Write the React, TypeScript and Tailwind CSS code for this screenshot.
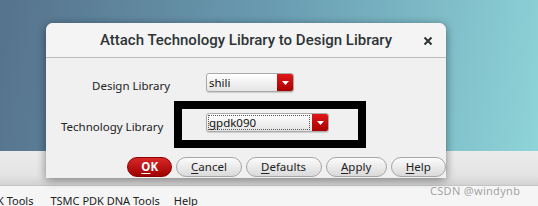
import React from "react";

const font = { fontFamily: '"Noto Sans", "Open Sans", sans-serif' };

function Combo({ value, width, focus }: { value: string; width: string; focus?: boolean }) {
  return (
    <div
      className={`flex h-[19px] ${width} rounded-[3px] border border-[#a9a9a9] overflow-hidden bg-[linear-gradient(#ffffff,#e4e4e4)] shadow-[0_1px_1px_rgba(0,0,0,0.15)]`}
    >
      <div className="flex-1 flex items-center pl-[1px] pr-[2px] py-[1px]">
        <div
          className={`flex-1 h-full flex items-center text-[11.5px] leading-none text-[#111] ${
            focus ? "border border-dotted border-[#555]" : "border border-transparent"
          }`}
        >
          {value}
        </div>
      </div>
      <div className="w-[16px] h-full flex items-center justify-center bg-[linear-gradient(#e01818,#a80000)]">
        <svg width="7" height="4" viewBox="0 0 7 4">
          <polygon points="0,0 7,0 3.5,4" fill="#fff" />
        </svg>
      </div>
    </div>
  );
}

function Btn({ first, rest, width, primary }: { first: string; rest: string; width: string; primary?: boolean }) {
  return (
    <div
      className={`h-[20px] ${width} rounded-full flex items-center justify-center text-[11.5px] leading-none ${
        primary
          ? "bg-[linear-gradient(#d82828,#a00000)] border border-[#8a0000] text-white font-bold"
          : "bg-[linear-gradient(#fbfbfb,#dadada)] border border-[#a6a6a6] text-[#222]"
      }`}
    >
      <span>
        <span className="underline underline-offset-2">{first}</span>
        {rest}
      </span>
    </div>
  );
}

export default function App() {
  return (
    <div className="relative w-[538px] h-[206px] overflow-hidden" style={font}>
      <div className="flex flex-col h-full">
        <div className="h-[153px] bg-[linear-gradient(100deg,#56728c_0%,#6a9db2_50%,#8ed4d8_100%)]" />
        <div className="h-[35px] bg-[linear-gradient(#ececec,#e4e4e4_70%,#d2d2d2)] border-b border-[#c4c4c4]" />
        <div className="flex-1 bg-[#f5f5f5] text-[11px] text-[#222] leading-none">
          <div className="flex pt-[9px] -ml-[3px]">
            <span>K Tools</span>
            <span className="ml-[17px]">TSMC PDK DNA Tools</span>
            <span className="ml-[14px]">Help</span>
          </div>
        </div>
      </div>

      <div className="absolute left-[46px] top-[23px] w-[400px] h-[155px] bg-[#f0f0f0] rounded-t-[7px] shadow-[0_2px_10px_rgba(0,0,0,0.45)] flex flex-col">
        <div className="relative h-[35px] flex items-center justify-center border-b border-[#bdbdbd] bg-[#f4f4f4] rounded-t-[7px]">
          <span
            className="text-[15px] font-medium text-[#2e3436]"
            style={{ fontFamily: 'Roboto, "Noto Sans", sans-serif' }}
          >
            Attach Technology Library to Design Library
          </span>
          <span className="absolute left-[377px] top-[13px]">
            <svg width="10" height="10" viewBox="0 0 10 10">
              <path d="M1.5 1.5 L8.5 8.5 M8.5 1.5 L1.5 8.5" stroke="#2e3436" strokeWidth="2" />
            </svg>
          </span>
        </div>
        <div className="flex flex-col pt-[15px]">
          <div className="flex">
            <div className="w-[160px] pl-[46px] pt-[7px] text-[11.5px] leading-none text-[#222]">Design Library</div>
            <Combo value="shili" width="w-[88px]" />
          </div>
          <div className="flex mt-[21px]">
            <div className="w-[160px] pl-[15px] pt-[8px] text-[11.5px] leading-none text-[#222]">Technology Library</div>
            <Combo value="gpdk090" width="w-[123px]" focus />
          </div>
          <div className="flex mt-[24px] pl-[81px] gap-[4px]">
            <Btn first="O" rest="K" width="w-[46px]" primary />
            <Btn first="C" rest="ancel" width="w-[66px]" />
            <Btn first="D" rest="efaults" width="w-[77px]" />
            <Btn first="A" rest="pply" width="w-[62px]" />
            <Btn first="H" rest="elp" width="w-[56px]" />
          </div>
        </div>
      </div>

      <div className="absolute left-[174px] top-[101px] w-[192px] h-[47px] border-[8px] border-black" />

      <div className="absolute left-[430px] top-[185px] text-[11px] leading-none text-[#a0a0a0] tracking-[0.3px] [text-shadow:0_0_1px_#fff,0_0_2px_#fff]">
        CSDN @windynb
      </div>
    </div>
  );
}
